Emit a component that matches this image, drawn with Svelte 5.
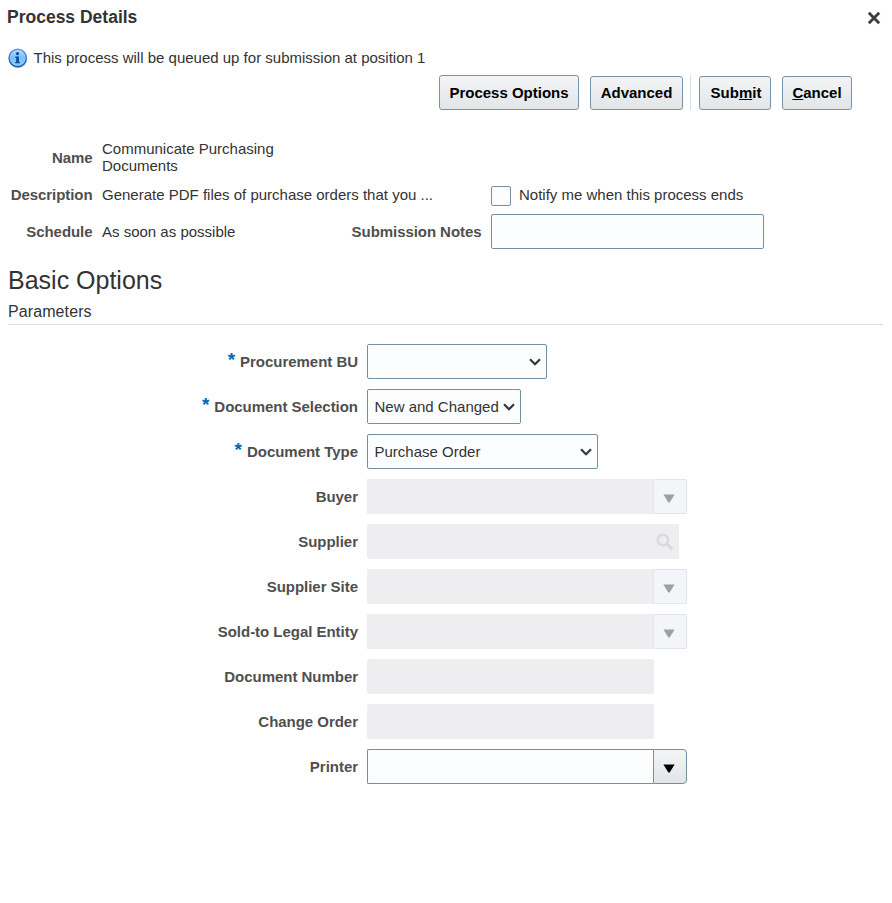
<script lang="ts">
  type Field = {
    label: string;
    kind: 'select' | 'combo' | 'lookup' | 'text';
    value?: string;
    size?: string;
    required?: boolean;
    disabled?: boolean;
  };

  const fields: Field[] = [
    { label: 'Procurement BU', kind: 'select', value: '', size: 'medium', required: true },
    { label: 'Document Selection', kind: 'select', value: 'New and Changed', size: 'small', required: true },
    { label: 'Document Type', kind: 'select', value: 'Purchase Order', size: 'large', required: true },
    { label: 'Buyer', kind: 'combo', disabled: true },
    { label: 'Supplier', kind: 'lookup', disabled: true },
    { label: 'Supplier Site', kind: 'combo', disabled: true },
    { label: 'Sold-to Legal Entity', kind: 'combo', disabled: true },
    { label: 'Document Number', kind: 'text', disabled: true },
    { label: 'Change Order', kind: 'text', disabled: true },
    { label: 'Printer', kind: 'combo' },
  ];

  let notify = $state(false);
  let notes = $state('');
</script>

<main class="dialog">
  <header class="dialog-header">
    <h1>Process Details</h1>
    <button class="close" aria-label="Close">
      <svg width="14" height="14" viewBox="0 0 14 14">
        <path d="M1.8 1.8l10.4 10.4M12.2 1.8L1.8 12.2" fill="none" stroke="#3a3d40" stroke-width="2.8" />
      </svg>
    </button>
  </header>

  <p class="message">
    <svg width="20" height="20" viewBox="0 0 20 20">
      <defs>
        <linearGradient id="info-fill" x1="0" y1="0" x2="0" y2="1">
          <stop offset="0" stop-color="#b9dcfa" />
          <stop offset="0.45" stop-color="#7fc0f8" />
          <stop offset="1" stop-color="#7fd4ff" />
        </linearGradient>
        <linearGradient id="info-ring" x1="0" y1="0" x2="0" y2="1">
          <stop offset="0" stop-color="#5c9bdc" />
          <stop offset="1" stop-color="#1c57a5" />
        </linearGradient>
      </defs>
      <circle cx="10" cy="10.8" r="9.2" fill="#9aa7b8" opacity="0.5" />
      <circle cx="9.7" cy="10" r="8.7" fill="url(#info-fill)" stroke="url(#info-ring)" stroke-width="1.4" />
      <circle cx="9.5" cy="5.6" r="1.6" fill="#0b4a9c" />
      <path d="M7.2 8.4h3.7v5.6h1v1.3H7.1v-1.3h1.1V9.7h-1z" fill="#0b4a9c" />
    </svg>
    <span>This process will be queued up for submission at position 1</span>
  </p>

  <div class="toolbar">
    <button class="btn btn-options">Process Options</button>
    <button class="btn btn-advanced">Advanced</button>
    <span class="separator"></span>
    <button class="btn btn-submit">Sub<u>m</u>it</button>
    <button class="btn btn-cancel"><u>C</u>ancel</button>
  </div>

  <section class="summary">
    <span class="label name-label">Name</span>
    <span class="name">Communicate Purchasing Documents</span>

    <span class="label">Description</span>
    <span class="description">Generate PDF files of purchase orders that you ...</span>
    <label class="notify">
      <input type="checkbox" bind:checked={notify} />
      <span>Notify me when this process ends</span>
    </label>

    <span class="label">Schedule</span>
    <span class="schedule">As soon as possible</span>
    <label class="label" for="notes">Submission Notes</label>
    <input id="notes" class="input" type="text" bind:value={notes} />
  </section>

  <h2>Basic Options</h2>
  <h3>Parameters</h3>

  <form class="parameters">
    {#each fields as field, i (field.label)}
      <label class="label" for="field-{i}">
        {#if field.required}<span class="required">*</span>{/if}{field.label}
      </label>
      <div class="control">
        {#if field.kind === 'select'}
          <div class="box {field.size}">
            <select id="field-{i}" class="input">
              <option>{field.value}</option>
            </select>
            <svg class="chevron" width="12" height="8" viewBox="0 0 12 8">
              <path d="M1 1.2l5 5 5-5" />
            </svg>
          </div>
        {:else}
          <div class="box {field.kind}" class:disabled={field.disabled}>
            <input id="field-{i}" class="input" type="text" disabled={field.disabled} />
            {#if field.kind === 'combo'}
              <button type="button" class="drop" disabled={field.disabled} aria-label="Open {field.label}">
                <svg width="12" height="9" viewBox="0 0 12 9">
                  <path d="M0.4 0.5h11.2L6.6 8.5H5.4z" fill="currentColor" />
                </svg>
              </button>
            {:else if field.kind === 'lookup'}
              <svg class="search" width="18" height="18" viewBox="0 0 18 18">
                <circle cx="6.9" cy="6.9" r="5.2" />
                <path d="M10.8 10.8L16.3 16.3" stroke-width="3.2" />
              </svg>
            {/if}
          </div>
        {/if}
      </div>
    {/each}
  </form>
</main>

<style>
  :global(body) {
    background: #fff;
  }

  .dialog {
    box-sizing: border-box;
    width: 892px;
    height: 903px;
    padding: 0 9px 0 8px;
    overflow: hidden;
    font-family: Arial, "Liberation Sans", sans-serif;
    font-size: 15px;
    line-height: 17px;
    color: #333;
  }

  button,
  input,
  select {
    box-sizing: border-box;
    margin: 0;
    font: inherit;
  }

  h1,
  h2,
  h3,
  p {
    margin: 0;
    font-weight: normal;
  }

  .dialog-header {
    display: flex;
    justify-content: space-between;
    height: 48px;
  }

  h1 {
    margin-left: -1px;
    padding-top: 7px;
    font-size: 17.5px;
    font-weight: bold;
    line-height: 20px;
  }

  .close {
    display: flex;
    height: 14px;
    margin: 11px 2px 0 0;
    padding: 0;
    border: 0;
    background: none;
  }

  .message {
    display: flex;
    gap: 6px;
    height: 27px;
    margin-left: -0.5px;
  }

  .message span {
    padding-top: 1px;
  }

  .toolbar {
    display: flex;
    justify-content: flex-end;
    align-items: flex-end;
    height: 35px;
    padding-right: 31px;
  }

  .btn {
    height: 34px;
    margin-left: 11px;
    padding: 0 0 2px;
    border: 1px solid #7a92a6;
    border-radius: 3px;
    background: linear-gradient(#f3f4f6, #e2e6e9);
    font-weight: bold;
    color: #000;
    white-space: nowrap;
  }

  .btn-options {
    width: 140px;
    height: 35px;
    padding-bottom: 0;
  }

  .btn-advanced {
    width: 93px;
  }

  .btn-submit {
    width: 72px;
    margin-left: 8px;
    padding-left: 2px;
  }

  .btn-cancel {
    width: 70px;
  }

  .separator {
    width: 1px;
    height: 35px;
    margin-left: 7px;
    background: #d5dfe8;
  }

  .summary {
    display: grid;
    grid-template-columns: 84px 238px 131px 273px;
    grid-template-rows: 34px 39px 35px;
    column-gap: 10px;
    align-items: center;
    margin-top: 31px;
  }

  .label {
    font-weight: bold;
    letter-spacing: -0.03px;
    color: #4f4f4f;
    text-align: right;
    white-space: nowrap;
  }

  .summary .label {
    margin-right: -0.5px;
    letter-spacing: -0.06px;
  }

  .summary .name-label {
    margin-bottom: 2px;
  }

  .name {
    grid-column: 2 / 5;
    width: 200px;
    margin-bottom: 2px;
  }

  .description {
    white-space: nowrap;
  }

  .notify {
    display: flex;
    grid-column: 3 / 5;
    align-items: center;
    gap: 8px;
    padding-left: 141px;
  }

  .notify input {
    appearance: none;
    width: 20px;
    height: 20px;
    margin-top: 2px;
    border: 1px solid #758d9e;
    border-radius: 2px;
    background: #fcfdfe;
  }

  .input {
    height: 35px;
    border: 1px solid #758f9f;
    border-radius: 2px;
    background: #fcfdfe;
    color: #333;
  }

  h2 {
    margin-top: 17px;
    font-size: 25px;
    line-height: 28px;
  }

  h3 {
    margin-top: 9px;
    padding-bottom: 3px;
    border-bottom: 1px solid #d5dfe8;
    font-size: 16px;
    letter-spacing: 0.1px;
    line-height: 18px;
  }

  .parameters {
    display: grid;
    grid-template-columns: 350px 1fr;
    grid-auto-rows: 35px;
    gap: 10px 9px;
    align-items: center;
    margin-top: 19px;
  }

  .required {
    position: relative;
    top: -1px;
    margin-right: 5px;
    font-size: 19px;
    line-height: 14px;
    color: #0066b3;
  }

  .control,
  .box {
    display: flex;
  }

  .box {
    position: relative;
    width: 287px;
  }

  .box .input {
    flex: 1;
    min-width: 0;
  }

  .box.small {
    width: 154px;
  }

  .box.medium {
    width: 180px;
  }

  .box.large {
    width: 231px;
  }

  .box.combo {
    width: 320px;
  }

  .box.lookup {
    width: 312px;
  }

  select.input {
    appearance: none;
    padding: 0 0 0 6.5px;
  }

  .chevron {
    position: absolute;
    top: 14px;
    right: 6px;
    fill: none;
    stroke: #333639;
    stroke-width: 2.2;
    pointer-events: none;
  }

  .combo .input {
    border-right: 0;
    border-radius: 2px 0 0 2px;
  }

  .disabled .input {
    border-color: #eeeef0;
    background: #eeeef0;
  }

  .combo.disabled .input {
    border-radius: 0;
  }

  .drop {
    display: flex;
    align-items: center;
    justify-content: center;
    width: 34px;
    height: 35px;
    padding: 3px 2px 0 0;
    border: 1px solid #758f9f;
    border-radius: 0 4px 4px 0;
    background: linear-gradient(#f3f4f6, #e2e6e9);
    color: #000;
  }

  .disabled .drop {
    border-color: #dfe5ec;
    border-radius: 1px;
    background: #f4f5f8;
    color: #9e9fa0;
  }

  .search {
    position: absolute;
    top: 9px;
    right: 5px;
    fill: none;
    stroke: #d9dadc;
    stroke-width: 2.6;
  }
</style>
